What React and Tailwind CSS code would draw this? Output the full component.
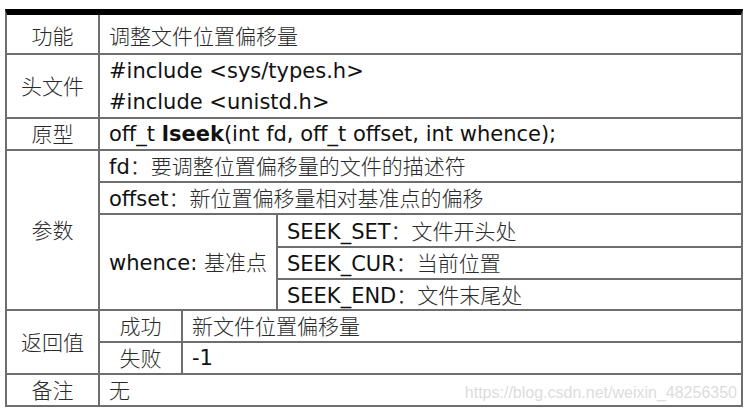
const font = { fontFamily: '"DejaVu Sans", "Noto Sans CJK SC", sans-serif' };

// CJK text in the reference is thin and a little grey
function Zh({ children }) {
  return (
    <span className="font-light text-[#2a2a2a]" style={{ fontFamily: '"Noto Sans CJK SC", sans-serif' }}>
      {children}
    </span>
  );
}

function Label({ children, width = "w-[93px]", className = "pt-[1px]" }) {
  return (
    <div className={`${width} shrink-0 border-r-2 border-[#6e6e6e] flex items-center justify-center ${className}`}>
      <span><Zh>{children}</Zh></span>
    </div>
  );
}

function Cell({ children, className = "" }) {
  return (
    <div className={`flex items-center pl-[9px] pt-[1px] ${className}`}>
      <span>{children}</span>
    </div>
  );
}

const line = "border-b-2 border-[#6e6e6e]";

export default function App() {
  return (
    <div className="w-[747px] h-[414px] bg-white text-[#111] overflow-hidden" style={font}>
      <div className="ml-[5px] mt-[9px] w-[738px] border-t-[6px] border-black border-x-2 border-x-[#6e6e6e] text-[21px] leading-none relative">
        {/* 功能 */}
        <div className={`flex h-[40px] ${line}`}>
          <Label className="pt-[4px]">功能</Label>
          <div className="flex items-center pl-[9px] pt-[4px]">
            <span><Zh>调整文件位置偏移量</Zh></span>
          </div>
        </div>

        {/* 头文件 */}
        <div className={`flex h-[64px] ${line}`}>
          <Label>头文件</Label>
          <div className="flex flex-col justify-center pl-[9px] pt-[2px] gap-[10px]">
            <div>#include &lt;sys/types.h&gt;</div>
            <div>#include &lt;unistd.h&gt;</div>
          </div>
        </div>

        {/* 原型 */}
        <div className={`flex h-[32px] ${line}`}>
          <Label>原型</Label>
          <Cell>
            off_t <b className="font-bold">lseek</b>(int fd, off_t offset, int whence);
          </Cell>
        </div>

        {/* 参数 */}
        <div className={`flex h-[160px] ${line}`}>
          <Label>参数</Label>
          <div className="flex-1 flex flex-col">
            <Cell className={`h-[32px] ${line}`}>fd<Zh>：要调整位置偏移量的文件的描述符</Zh></Cell>
            <Cell className={`h-[32px] ${line}`}>offset<Zh>：新位置偏移量相对基准点的偏移</Zh></Cell>
            <div className="flex flex-1">
              <Cell className="w-[178px] border-r-2 border-[#6e6e6e]">whence: <Zh>基准点</Zh></Cell>
              <div className="flex-1 flex flex-col">
                <Cell className={`h-[33px] ${line}`}>SEEK_SET<Zh>：文件开头处</Zh></Cell>
                <Cell className={`h-[32px] ${line}`}>SEEK_CUR<Zh>：当前位置</Zh></Cell>
                <Cell className="flex-1">SEEK_END<Zh>：文件末尾处</Zh></Cell>
              </div>
            </div>
          </div>
        </div>

        {/* 返回值 */}
        <div className={`flex h-[64px] ${line}`}>
          <Label>返回值</Label>
          <div className="flex-1 flex flex-col">
            <div className={`flex h-[32px] ${line}`}>
              <Label width="w-[83px]">成功</Label>
              <Cell><Zh>新文件位置偏移量</Zh></Cell>
            </div>
            <div className="flex flex-1">
              <Label width="w-[83px]">失败</Label>
              <Cell>-1</Cell>
            </div>
          </div>
        </div>

        {/* 备注 */}
        <div className={`flex h-[32px] ${line}`}>
          <Label>备注</Label>
          <Cell><Zh>无</Zh></Cell>
        </div>

        <div
          className="absolute right-[4px] bottom-[6px] text-[16px] text-[#dcdcdc]"
          style={{ fontFamily: '"Liberation Sans", Arial, sans-serif' }}
        >
          https://blog.csdn.net/weixin_48256350
        </div>
      </div>
    </div>
  );
}
